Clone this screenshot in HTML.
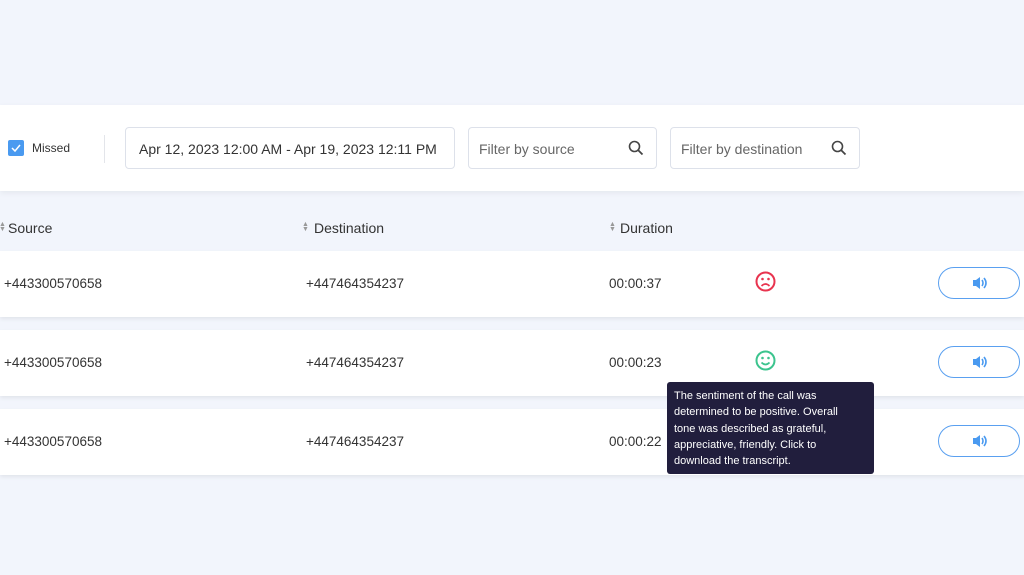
<!DOCTYPE html>
<html><head><style>
body{margin:0;width:1024px;height:575px;background:#f2f5fc;font-family:"Liberation Sans",sans-serif;color:#2a2a35;position:relative;overflow:hidden}
.a{position:absolute}
.bar{left:0;top:105px;width:1024px;height:86px;background:#fff;box-shadow:0 2px 6px rgba(0,0,0,.06)}
.inp{border:1px solid #dde1ea;border-radius:4px;background:#fff;height:42px;box-sizing:border-box;font-size:14px;line-height:42px;color:#333}
.row{left:0;width:1024px;height:66px;background:#fff;box-shadow:0 2px 4px rgba(0,0,0,.07)}
.t{font-size:13.5px;color:#333}
.h{font-size:14px;color:#333}
.btn{width:82px;height:32px;border:1.5px solid #5aa0f0;border-radius:17px;box-sizing:border-box;left:938px}
.arr{font-size:7px;color:#999;line-height:5px}
</style></head><body>
<div class="a bar"></div>
<div class="a" style="left:8px;top:140px;width:16px;height:16px;background:#4a9af0;border-radius:2px"><svg width="16" height="16"><path d="M4 8l3 3 5-6" stroke="#fff" stroke-width="1.5" fill="none"/></svg></div>
<div class="a t" style="left:32px;top:141px;font-size:12px">Missed</div>
<div class="a" style="left:104px;top:135px;width:1px;height:28px;background:#e3e5ea"></div>
<div class="a inp" style="left:125px;top:127px;width:330px;padding-left:13px">Apr 12, 2023 12:00 AM - Apr 19, 2023 12:11 PM</div>
<div class="a inp" style="left:468px;top:127px;width:189px;padding-left:10px;color:#666">Filter by source</div>
<div class="a inp" style="left:670px;top:127px;width:190px;padding-left:10px;color:#666">Filter by destination</div>
<svg class="a" style="left:628px;top:140px" width="16" height="16"><circle cx="6.5" cy="6.5" r="5" stroke="#444" stroke-width="1.6" fill="none"/><path d="M10 10l4.5 4.5" stroke="#444" stroke-width="1.8"/></svg>
<svg class="a" style="left:831px;top:140px" width="16" height="16"><circle cx="6.5" cy="6.5" r="5" stroke="#444" stroke-width="1.6" fill="none"/><path d="M10 10l4.5 4.5" stroke="#444" stroke-width="1.8"/></svg>
<div class="a h" style="left:8px;top:220px">Source</div>
<div class="a arr" style="left:-1px;top:222px">▲<br>▼</div>
<div class="a arr" style="left:302px;top:222px">▲<br>▼</div>
<div class="a h" style="left:314px;top:220px">Destination</div>
<div class="a arr" style="left:609px;top:222px">▲<br>▼</div>
<div class="a h" style="left:620px;top:220px">Duration</div>

<div class="a row" style="top:251px"></div>
<div class="a row" style="top:330px"></div>
<div class="a row" style="top:409px"></div>

<div class="a t" style="left:4px;top:276px">+443300570658</div>
<div class="a t" style="left:306px;top:276px">+447464354237</div>
<div class="a t" style="left:609px;top:276px">00:00:37</div>
<div class="a t" style="left:4px;top:355px">+443300570658</div>
<div class="a t" style="left:306px;top:355px">+447464354237</div>
<div class="a t" style="left:609px;top:355px">00:00:23</div>
<div class="a t" style="left:4px;top:434px">+443300570658</div>
<div class="a t" style="left:306px;top:434px">+447464354237</div>
<div class="a t" style="left:609px;top:434px">00:00:22</div>

<svg class="a" style="left:755px;top:271px" width="21" height="21"><circle cx="10.5" cy="10.5" r="9" stroke="#e8344f" stroke-width="2" fill="none"/><circle cx="7.5" cy="8" r="1.3" fill="#e8344f"/><circle cx="13.5" cy="8" r="1.3" fill="#e8344f"/><path d="M6.5 15q4-4 8 0" stroke="#e8344f" stroke-width="1.7" fill="none"/></svg>
<svg class="a" style="left:755px;top:350px" width="21" height="21"><circle cx="10.5" cy="10.5" r="9" stroke="#3cc48e" stroke-width="2" fill="none"/><circle cx="7.5" cy="8" r="1.3" fill="#3cc48e"/><circle cx="13.5" cy="8" r="1.3" fill="#3cc48e"/><path d="M6.5 12.5q4 4 8 0" stroke="#3cc48e" stroke-width="1.7" fill="none"/></svg>

<div class="a btn" style="top:267px"></div>
<div class="a btn" style="top:346px"></div>
<div class="a btn" style="top:425px"></div>
<svg class="a" style="left:972px;top:276px" width="16" height="14"><path d="M1 4h3l4-3v12l-4-3H1z" fill="#4a9af0"/><path d="M10 4q2 3 0 6M12 2q4 5 0 10" stroke="#4a9af0" stroke-width="1.6" fill="none"/></svg>
<svg class="a" style="left:972px;top:355px" width="16" height="14"><path d="M1 4h3l4-3v12l-4-3H1z" fill="#4a9af0"/><path d="M10 4q2 3 0 6M12 2q4 5 0 10" stroke="#4a9af0" stroke-width="1.6" fill="none"/></svg>
<svg class="a" style="left:972px;top:434px" width="16" height="14"><path d="M1 4h3l4-3v12l-4-3H1z" fill="#4a9af0"/><path d="M10 4q2 3 0 6M12 2q4 5 0 10" stroke="#4a9af0" stroke-width="1.6" fill="none"/></svg>

<div class="a" style="left:667px;top:382px;width:207px;height:92px;background:#211e3d;border-radius:3px;color:#fff;font-size:11px;line-height:16.3px;padding:6px 7px;box-sizing:border-box;white-space:nowrap">The sentiment of the call was<br>determined to be positive. Overall<br>tone was described as grateful,<br>appreciative, friendly. Click to<br>download the transcript.</div>
</body></html>
